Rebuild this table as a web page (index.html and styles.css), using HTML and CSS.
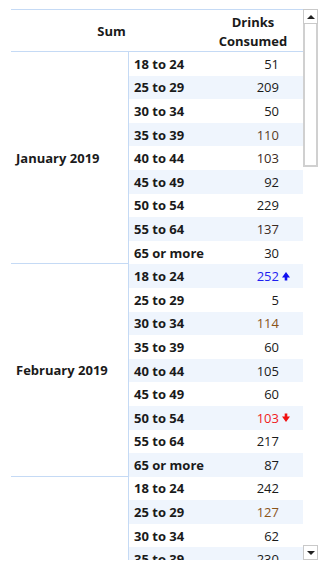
FILE: index.html
```html
<!DOCTYPE html>
<html>
<head>
<meta charset="utf-8">
<link rel="stylesheet" href="styles.css">
</head>
<body>
<div class="visual">
  <div class="table">
    <div class="head">
      <div class="h-sum">Sum</div>
      <div class="h-val"><span>Drinks<br>Consumed</span></div>
    </div>
    <div class="group">
      <div class="gname">January 2019</div>
      <div class="rows">
        <div class="row"><span class="age">18 to 24</span><span class="val"><span class="num">51</span><span class="ico"></span></span></div>
        <div class="row alt"><span class="age">25 to 29</span><span class="val"><span class="num">209</span><span class="ico"></span></span></div>
        <div class="row"><span class="age">30 to 34</span><span class="val"><span class="num">50</span><span class="ico"></span></span></div>
        <div class="row alt"><span class="age">35 to 39</span><span class="val"><span class="num tint1">110</span><span class="ico"></span></span></div>
        <div class="row"><span class="age">40 to 44</span><span class="val"><span class="num tint2">103</span><span class="ico"></span></span></div>
        <div class="row alt"><span class="age">45 to 49</span><span class="val"><span class="num">92</span><span class="ico"></span></span></div>
        <div class="row"><span class="age">50 to 54</span><span class="val"><span class="num">229</span><span class="ico"></span></span></div>
        <div class="row alt"><span class="age">55 to 64</span><span class="val"><span class="num tint2">137</span><span class="ico"></span></span></div>
        <div class="row"><span class="age">65 or more</span><span class="val"><span class="num">30</span><span class="ico"></span></span></div>
      </div>
    </div>
    <div class="group">
      <div class="gname">February 2019</div>
      <div class="rows">
        <div class="row alt"><span class="age">18 to 24</span><span class="val"><span class="num up">252</span><span class="ico"><svg width="8" height="9" viewBox="0 0 8 9"><path d="M4 0L8 5.5H5.3V8.5H2.7V5.5H0Z" fill="#1010f0"/></svg></span></span></div>
        <div class="row"><span class="age">25 to 29</span><span class="val"><span class="num">5</span><span class="ico"></span></span></div>
        <div class="row alt"><span class="age">30 to 34</span><span class="val"><span class="num tint3">114</span><span class="ico"></span></span></div>
        <div class="row"><span class="age">35 to 39</span><span class="val"><span class="num">60</span><span class="ico"></span></span></div>
        <div class="row alt"><span class="age">40 to 44</span><span class="val"><span class="num">105</span><span class="ico"></span></span></div>
        <div class="row"><span class="age">45 to 49</span><span class="val"><span class="num">60</span><span class="ico"></span></span></div>
        <div class="row alt"><span class="age">50 to 54</span><span class="val"><span class="num down">103</span><span class="ico"><svg width="8" height="9" viewBox="0 0 8 9"><path d="M4 9L8 3.5H5.3V0.5H2.7V3.5H0Z" fill="#f01010"/></svg></span></span></div>
        <div class="row"><span class="age">55 to 64</span><span class="val"><span class="num">217</span><span class="ico"></span></span></div>
        <div class="row alt"><span class="age">65 or more</span><span class="val"><span class="num">87</span><span class="ico"></span></span></div>
      </div>
    </div>
    <div class="group">
      <div class="gname"></div>
      <div class="rows">
        <div class="row"><span class="age">18 to 24</span><span class="val"><span class="num">242</span><span class="ico"></span></span></div>
        <div class="row alt"><span class="age">25 to 29</span><span class="val"><span class="num tint3">127</span><span class="ico"></span></span></div>
        <div class="row"><span class="age">30 to 34</span><span class="val"><span class="num">62</span><span class="ico"></span></span></div>
        <div class="row alt"><span class="age">35 to 39</span><span class="val"><span class="num">230</span><span class="ico"></span></span></div>
      </div>
    </div>
  </div>
  <div class="scroll">
    <div class="sbtn"><span class="tri-up"></span></div>
    <div class="thumb"></div>
    <div class="sbtn bottom"><span class="tri-down"></span></div>
  </div>
</div>
</body>
</html>
```
FILE: styles.css
```css
html, body {
  margin: 0;
  background: #ffffff;
}
body {
  font-family: "Open Sans", "Liberation Sans", sans-serif;
  font-size: 13px;
  color: #1a1a1a;
}
.visual {
  display: flex;
  padding: 9px 0 0 11px;
}
.table {
  width: 292px;
  height: 551px;
  overflow: hidden;
  border-top: 1px solid #c5daf5;
  box-sizing: border-box;
}
.head {
  display: flex;
  height: 42px;
  border-bottom: 1px solid #c5daf5;
  box-sizing: border-box;
  font-weight: 700;
}
.h-sum {
  width: 201px;
  display: flex;
  align-items: center;
  justify-content: center;
}
.h-val {
  width: 91px;
  padding: 2px 9px 0 0;
  box-sizing: border-box;
  display: flex;
  align-items: center;
  justify-content: center;
  text-align: center;
  line-height: 19px;
}
.group {
  display: flex;
}
.gname {
  width: 117px;
  flex: none;
  box-sizing: border-box;
  border-bottom: 1px solid #c5daf5;
  display: flex;
  align-items: center;
  padding-left: 5px;
  font-weight: 700;
}
.rows {
  flex: 1;
  border-left: 1px solid #c5daf5;
}
.row {
  display: flex;
  align-items: center;
  height: 23.6px;
}
.row.alt {
  background: #eff5fd;
}
.age {
  width: 83px;
  flex: none;
  padding-left: 5px;
  box-sizing: border-box;
  font-weight: 700;
  white-space: nowrap;
}
.val {
  flex: 1;
  display: flex;
  justify-content: flex-end;
  align-items: center;
  padding-right: 11px;
}
.ico {
  width: 13px;
  display: flex;
  align-items: center;
  padding-left: 3px;
  box-sizing: border-box;
}
.ico svg {
  display: block;
}
.num.up { color: #1f1ff0; }
.num.down { color: #f01c1c; }
.num.tint1 { color: #5a3c26; }
.num.tint2 { color: #3c2a22; }
.num.tint3 { color: #8a5418; }
.scroll {
  width: 15px;
  height: 551px;
  display: flex;
  flex-direction: column;
}
.sbtn {
  height: 15px;
  box-sizing: border-box;
  border: 1px solid #c9c9c9;
  background: #fff;
  display: flex;
  align-items: center;
  justify-content: center;
}
.sbtn.bottom {
  margin-top: auto;
}
.thumb {
  height: 143px;
  box-sizing: border-box;
  border: 2px solid #d0d0d0;
  border-top: none;
  background: #fff;
}
.tri-up {
  width: 0;
  height: 0;
  border-left: 4px solid transparent;
  border-right: 4px solid transparent;
  border-bottom: 4px solid #222;
}
.tri-down {
  width: 0;
  height: 0;
  border-left: 4px solid transparent;
  border-right: 4px solid transparent;
  border-top: 4px solid #222;
}
```
